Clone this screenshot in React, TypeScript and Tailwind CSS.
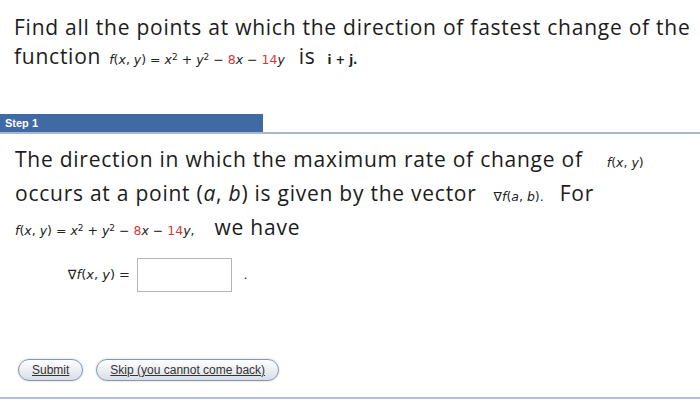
import React from "react";

const body = { fontFamily: '"Open Sans", "Noto Sans", sans-serif' };

function M({ children, red }: { children: React.ReactNode; red?: boolean }) {
  return <span className={red ? "text-[#d23a3a]" : ""}>{children}</span>;
}

function Fxy({ comma }: { comma?: boolean }) {
  return (
    <span className="font-['DejaVu_Sans',sans-serif] text-[12.5px] tracking-normal text-[#222] whitespace-nowrap">
      <i>f</i>(<i>x</i>, <i>y</i>) = <i>x</i>
      <sup className="text-[9px]">2</sup> + <i>y</i>
      <sup className="text-[9px]">2</sup> − <M red>8</M>
      <i>x</i> − <M red>14</M>
      <i>y</i>
      {comma ? "," : ""}
    </span>
  );
}

function Btn({ label }: { label: string }) {
  return (
    <button className="h-[22px] px-[13px] rounded-full border border-[#8797b0] bg-gradient-to-b from-white to-[#d9dee6] text-[12px] text-[#333] underline font-['Liberation_Sans',Arial,sans-serif] shadow-[0_0_2px_rgba(120,140,170,0.5)]">
      {label}
    </button>
  );
}

export default function App() {
  return (
    <div className="w-[700px] h-[409px] bg-white text-[#1c1c1c] overflow-hidden" style={body}>
      <div className="pl-[14px] pt-[13px] text-[21px] tracking-[0.75px] leading-[29px]">
        <div>Find all the points at which the direction of fastest change of the</div>
        <div>
          function
          <span className="ml-[8px]">
            <Fxy />
          </span>
          <span className="ml-[14px]">is</span>
          <span className="ml-[12px] font-['DejaVu_Sans',sans-serif] text-[11.5px] tracking-normal font-bold">
            i + j.
          </span>
        </div>
      </div>

      <div className="mt-[39px] flex items-end border-b-2 border-[#a9b7cf]">
        <div className="w-[263px] h-[18px] bg-[#3f6aa3] pl-[5px] text-white text-[11px] font-bold leading-[18px] font-['Liberation_Sans',Arial,sans-serif]">
          Step 1
        </div>
      </div>

      <div className="pl-[15px] mt-[10px] text-[21px] tracking-[0.75px] leading-[30px]">
        <div>
          The direction in which the maximum rate of change of
          <span className="ml-[24px] font-['DejaVu_Sans',sans-serif] text-[12.5px] tracking-normal text-[#222]">
            <i>f</i>(<i>x</i>, <i>y</i>)
          </span>
        </div>
        <div>
          occurs at a point (<i>a</i>, <i>b</i>) is given by the vector
          <span className="ml-[17px] font-['DejaVu_Sans',sans-serif] text-[12.5px] tracking-normal text-[#222]">
            ∇<i>f</i>(<i>a</i>, <i>b</i>).
          </span>
          <span className="ml-[16px]">For</span>
        </div>
        <div>
          <Fxy comma />
          <span className="ml-[20px]">we have</span>
        </div>
      </div>

      <div className="mt-[12px] flex items-center">
        <div className="w-[136px] pr-[6px] text-right font-['DejaVu_Sans',sans-serif] text-[13px] text-[#222]">
          ∇<i>f</i>(<i>x</i>, <i>y</i>) =
        </div>
        <div className="ml-[1px] w-[95px] h-[34px] border border-[#b5b5b5]" />
        <div className="ml-[12px] text-[12px]">.</div>
      </div>

      <div className="mt-[67px] pl-[18px] flex gap-[13px]">
        <Btn label="Submit" />
        <Btn label="Skip (you cannot come back)" />
      </div>

      <div className="mt-[16px] h-[2px] bg-[#b2bfd6]" />
    </div>
  );
}
